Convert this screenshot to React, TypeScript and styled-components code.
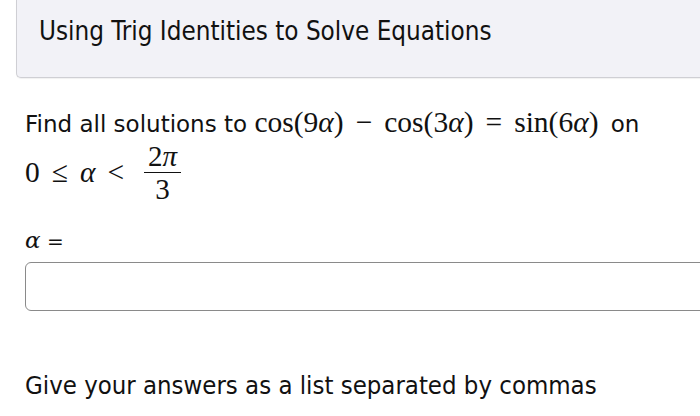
import styled, { createGlobalStyle } from "styled-components";

const Global = createGlobalStyle`
  html, body {
    margin: 0;
    padding: 0;
    background: #fff;
    overflow: hidden;
  }
  body {
    width: 700px;
    height: 416px;
    color: #111;
  }
`;

const Page = styled.div`
  display: flex;
  flex-direction: column;
  width: 700px;
  overflow: hidden;
`;

const Header = styled.div`
  margin-left: 16px;
  width: 700px;
  height: 78px;
  box-sizing: border-box;
  background: #f2f2f7;
  border: 1px solid #cfcfd4;
  border-top: none;
  border-right: none;
  border-bottom-left-radius: 5px;
  padding: 15px 0 0 22px;
  box-shadow: 0 1px 1px rgba(0, 0, 0, 0.06);
`;

const Title = styled.h1`
  margin: 0;
  font-family: "DejaVu Sans Condensed", "DejaVu Sans", sans-serif;
  font-weight: normal;
  font-size: 25.8px;
  line-height: 32px;
  color: #111;
`;

const Body = styled.div`
  display: flex;
  flex-direction: column;
  padding: 0 0 0 25px;
`;

const Prompt = styled.div`
  margin-top: 28px;
  font-family: "DejaVu Sans", Verdana, sans-serif;
  font-size: 23px;
  line-height: 32px;
  white-space: nowrap;
`;

const Math = styled.span`
  font-family: "Liberation Serif", "DejaVu Serif", serif;
  font-size: 29.5px;
  margin-right: 5px;
`;

const Var = styled.i`
  font-family: "Liberation Serif", "DejaVu Serif", serif;
`;

const Op = styled.span<{ $space?: number }>`
  padding: 0 ${(p) => p.$space ?? 12}px;
`;

const RangeLine = styled.div`
  display: flex;
  align-items: center;
  font-family: "Liberation Serif", "DejaVu Serif", serif;
  font-size: 29.5px;
  margin-top: 2px;
`;

const Frac = styled.span`
  display: inline-flex;
  flex-direction: column;
  align-items: center;
  margin-left: 8px;
  font-size: 29px;
  line-height: 28px;
`;

const Num = styled.span`
  padding: 0 4px 2px;
  border-bottom: 1.5px solid #111;
`;

const Den = styled.span`
  padding: 2px 4px 0;
`;

const Label = styled.div`
  margin-top: 25px;
  font-family: "DejaVu Sans", sans-serif;
  font-size: 20px;
  line-height: 24px;
`;

const LabelVar = styled.i`
  font-family: "DejaVu Serif", "Liberation Serif", serif;
  font-size: 23px;
`;

const Input = styled.input`
  margin-top: 9px;
  width: 700px;
  height: 49px;
  box-sizing: border-box;
  border: 1.5px solid #8a8a8a;
  border-radius: 6px;
  background: #fff;
  outline: none;
`;

const Hint = styled.p`
  margin: 59px 0 0;
  font-family: "DejaVu Sans Condensed", "DejaVu Sans", sans-serif;
  font-size: 25.5px;
  line-height: 30px;
  white-space: nowrap;
`;

export default function App() {
  return (
    <Page>
      <Global />
      <Header>
        <Title>Using Trig Identities to Solve Equations</Title>
      </Header>
      <Body>
        <Prompt>
          Find all solutions to{" "}
          <Math>
            cos(9<Var>α</Var>)<Op>−</Op>cos(3<Var>α</Var>)<Op>=</Op>sin(6
            <Var>α</Var>)
          </Math>{" "}
          on
        </Prompt>
        <RangeLine>
          0<Op>≤</Op>
          <Var>α</Var>
          <Op>&lt;</Op>
          <Frac>
            <Num>
              2<Var>π</Var>
            </Num>
            <Den>3</Den>
          </Frac>
        </RangeLine>
        <Label>
          <LabelVar>α</LabelVar> =
        </Label>
        <Input type="text" />
        <Hint>Give your answers as a list separated by commas</Hint>
      </Body>
    </Page>
  );
}
